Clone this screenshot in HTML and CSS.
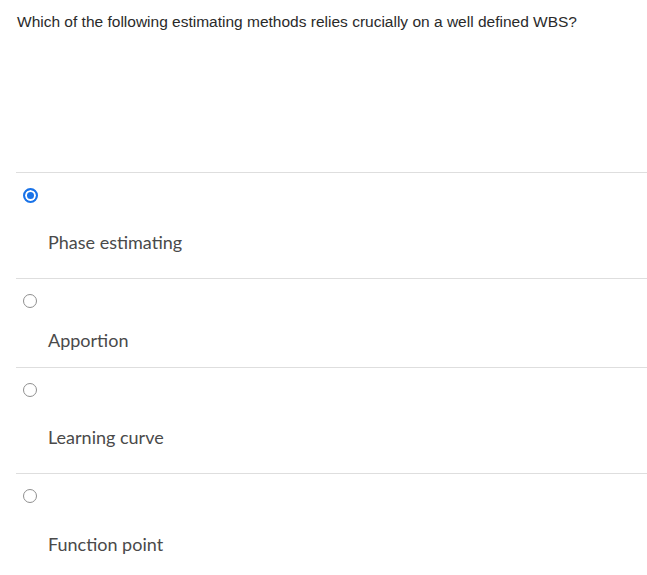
FILE: index.html
```html
<!DOCTYPE html>
<html>
<head>
<meta charset="utf-8">
<link rel="stylesheet" href="styles.css">
</head>
<body>
<div class="quiz">
  <p class="question">Which of the following estimating methods relies crucially on a well defined WBS?</p>
  <ul class="answers">
    <li class="answer">
      <span class="radio radio-checked"></span>
      <span class="label">Phase estimating</span>
    </li>
    <li class="answer answer-short">
      <span class="radio"></span>
      <span class="label">Apportion</span>
    </li>
    <li class="answer">
      <span class="radio"></span>
      <span class="label">Learning curve</span>
    </li>
    <li class="answer answer-last">
      <span class="radio"></span>
      <span class="label">Function point</span>
    </li>
  </ul>
</div>
</body>
</html>
```
FILE: styles.css
```css
html, body {
  margin: 0;
  padding: 0;
  background: #fff;
}
.quiz {
  padding-left: 16px;
}
.question {
  margin: 0;
  padding-top: 13px;
  padding-left: 1px;
  font-family: "Liberation Sans", Arial, sans-serif;
  font-size: 15.5px;
  line-height: 18px;
  color: #2a2a2a;
  height: 159px;
}
.answers {
  list-style: none;
  margin: 0;
  padding: 0;
}
.answer {
  display: flex;
  flex-direction: column;
  align-items: flex-start;
  border-top: 1px solid #dedede;
  height: 106px;
  padding-top: 15px;
  box-sizing: border-box;
}
.answer-short {
  height: 89px;
}
.answer-last {
  height: 102px;
}
.radio {
  width: 12px;
  height: 12px;
  border: 1px solid #8f8f8f;
  border-radius: 50%;
  margin-left: 7px;
  background: #fff;
  box-sizing: content-box;
}
.radio-checked {
  width: 11px;
  height: 11px;
  border: 2px solid #1a73e8;
  background: #1a73e8;
  box-shadow: inset 0 0 0 2px #fff;
  margin-left: 7px;
}
.label {
  margin-top: 29px;
  margin-left: 32px;
  font-family: Lato, "Noto Sans", sans-serif;
  font-size: 18px;
  line-height: 22px;
  color: #4a4a4a;
}
.radio-checked + .label {
  margin-top: 28px;
}
.answer-short .label {
  margin-top: 21px;
}
.answer-last .label {
  margin-top: 30px;
}
```
